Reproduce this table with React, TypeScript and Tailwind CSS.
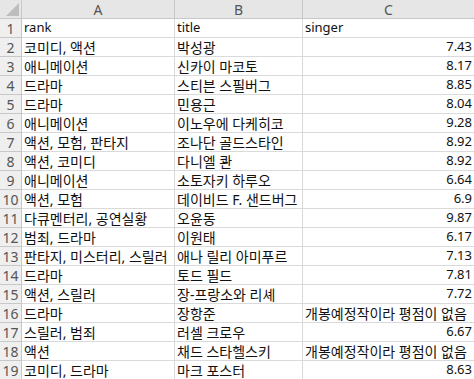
const rows: [string, string, string][] = [
  ['코미디, 액션', '박성광', '7.43'],
  ['애니메이션', '신카이 마코토', '8.17'],
  ['드라마', '스티븐 스필버그', '8.85'],
  ['드라마', '민용근', '8.04'],
  ['애니메이션', '이노우에 다케히코', '9.28'],
  ['액션, 모험, 판타지', '조나단 골드스타인', '8.92'],
  ['액션, 코미디', '다니엘 콴', '8.92'],
  ['애니메이션', '소토자키 하루오', '6.64'],
  ['액션, 모험', '데이비드 F. 샌드버그', '6.9'],
  ['다큐멘터리, 공연실황', '오윤동', '9.87'],
  ['범죄, 드라마', '이원태', '6.17'],
  ['판타지, 미스터리, 스릴러', '애나 릴리 아미푸르', '7.13'],
  ['드라마', '토드 필드', '7.81'],
  ['액션, 스릴러', '장-프랑소와 리셰', '7.72'],
  ['드라마', '장항준', '개봉예정작이라 평점이 없음'],
  ['스릴러, 범죄', '러셀 크로우', '6.67'],
  ['액션', '채드 스타헬스키', '개봉예정작이라 평점이 없음'],
  ['코미디, 드라마', '마크 포스터', '8.63'],
]

const isNumber = (v: string) => /^[0-9.]+$/.test(v)

const cell =
  'h-[19px] border-r border-b border-[#dadada] px-[2px] flex items-center whitespace-nowrap overflow-visible'

const App = () => {
  return (
    <div
      className="w-[474px] h-[379px] overflow-hidden bg-white text-[13px] text-[#111]"
      style={{ fontFamily: '"Noto Sans", "Noto Sans CJK KR", sans-serif' }}
    >
      <div className="grid grid-cols-[22px_153px_128px_172px]">
        {/* column header */}
        <div className="h-[19px] bg-[#e6e6e6] border-r border-b border-[#c8c8c8] relative">
          <svg className="absolute right-[2px] bottom-[2px]" width="13" height="13" viewBox="0 0 13 13">
            <polygon points="13,0 13,13 0,13" fill="#bdbdbd" />
          </svg>
        </div>
        {['A', 'B', 'C'].map((c) => (
          <div
            key={c}
            className="h-[19px] bg-[#e6e6e6] border-r border-b border-[#c8c8c8] flex items-center justify-center text-[#555] text-[14px]"
          >
            {c}
          </div>
        ))}

        {/* header row */}
        <div className="h-[19px] bg-[#efefef] border-r border-b border-[#c8c8c8] flex items-center justify-center text-[#555] text-[14px]">
          1
        </div>
        <div className={cell}>rank</div>
        <div className={cell}>title</div>
        <div className={cell}>singer</div>

        {rows.map(([genre, title, score], i) => (
          <div key={i} className="contents">
            <div className="h-[19px] bg-[#efefef] border-r border-b border-[#c8c8c8] flex items-center justify-center text-[#555] text-[14px]">
              {i + 2}
            </div>
            <div className={`${cell} text-[14px]`}>{genre}</div>
            <div className={`${cell} text-[14px]`}>{title}</div>
            <div className={`${cell} ${isNumber(score) ? 'justify-end' : 'text-[14px]'}`}>{score}</div>
          </div>
        ))}
      </div>
    </div>
  )
}

export default App
